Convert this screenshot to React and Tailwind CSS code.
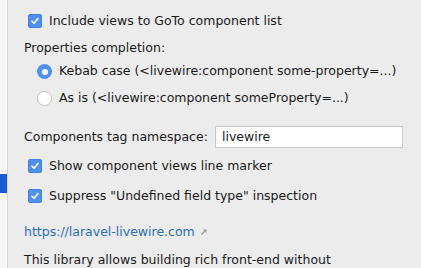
import React from "react";

const font = { fontFamily: '"DejaVu Sans", "Liberation Sans", sans-serif' };

function Check() {
  return (
    <span className="flex h-[14px] w-[14px] shrink-0 items-center justify-center rounded-[3px] bg-[#4f91ef] shadow-[inset_0_0_0_1px_#3f82e0]">
      <svg width="10" height="10" viewBox="0 0 10 10">
        <path d="M2 5.2 L4.1 7.3 L8 2.6" fill="none" stroke="white" strokeWidth="1.6" strokeLinecap="round" strokeLinejoin="round" />
      </svg>
    </span>
  );
}

function Radio({ on }) {
  return on ? (
    <span className="flex h-[15px] w-[15px] shrink-0 items-center justify-center rounded-full bg-[#4f91ef]">
      <span className="h-[6px] w-[6px] rounded-full bg-white" />
    </span>
  ) : (
    <span className="h-[15px] w-[15px] shrink-0 rounded-full border border-[#c4c4c4] bg-white" />
  );
}

export default function App() {
  return (
    <div className="flex h-[268px] w-[421px] overflow-hidden bg-[#ececec] text-[12.5px] text-[#1a1a1a]" style={font}>
      <div className="flex w-[8px] shrink-0 flex-col border-r border-[#d6d6d6] bg-[#f6f6f6] pt-[174px]">
        <div className="h-[19px] w-[7px] bg-[#1d5bd6]" />
      </div>
      <div className="flex flex-1 flex-col pl-[16px] pt-[14px]">
        <div className="flex h-[14px] items-center gap-[7px] pl-[4px]">
          <Check />
          <span>Include views to GoTo component list</span>
        </div>
        <div className="mt-[12px] h-[16px] leading-[16px]">Properties completion:</div>
        <div className="mt-[8px] flex h-[15px] items-center gap-[7px] pl-[13px]">
          <Radio on />
          <span>Kebab case (&lt;livewire:component some-property=...)</span>
        </div>
        <div className="mt-[12px] flex h-[15px] items-center gap-[7px] pl-[13px]">
          <Radio />
          <span>As is (&lt;livewire:component someProperty=...)</span>
        </div>
        <div className="mt-[20px] flex h-[22px] items-center">
          <span className="w-[191px]">Components tag namespace:</span>
          <div className="flex h-[22px] w-[188px] items-center border border-[#c8c8c8] bg-white pl-[6px]">livewire</div>
        </div>
        <div className="mt-[11px] flex h-[14px] items-center gap-[7px] pl-[4px]">
          <Check />
          <span>Show component views line marker</span>
        </div>
        <div className="mt-[16px] flex h-[14px] items-center gap-[7px] pl-[4px]">
          <Check />
          <span>Suppress "Undefined field type" inspection</span>
        </div>
        <div className="mt-[21px] flex h-[16px] items-center gap-[5px] text-[#2a6fb8]">
          <span>https://laravel-livewire.com</span>
          <svg width="8" height="8" viewBox="0 0 8 8">
            <path d="M1.5 6.5 L6 2" stroke="#9a9a9a" strokeWidth="1.4" />
            <path d="M3 1.5 L6.5 1.5 L6.5 5 Z" fill="#9a9a9a" />
          </svg>
        </div>
        <div className="mt-[12px] h-[16px] leading-[16px]">This library allows building rich front-end without</div>
      </div>
    </div>
  );
}
